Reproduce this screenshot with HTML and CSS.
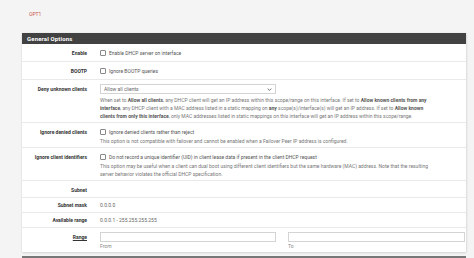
FILE: index.html
```html
<!DOCTYPE html>
<html>
<head>
<meta charset="utf-8">
<link rel="stylesheet" href="styles.css">
</head>
<body>
<div class="page">
  <div class="tabs"><span class="tab">OPT1</span></div>
  <div class="panel">
    <div class="panel-heading">General Options</div>
    <div class="row">
      <div class="label">Enable</div>
      <div class="value"><label class="check"><span class="box"></span>Enable DHCP server on interface</label></div>
    </div>
    <div class="row">
      <div class="label">BOOTP</div>
      <div class="value"><label class="check"><span class="box"></span>Ignore BOOTP queries</label></div>
    </div>
    <div class="row row-help">
      <div class="label">Deny unknown clients</div>
      <div class="value">
        <div class="select"><span>Allow all clients</span><svg class="chev" viewBox="0 0 8 5" width="5" height="3"><path d="M1 1 L4 4 L7 1" fill="none" stroke="#555" stroke-width="1.4"/></svg></div>
        <div class="help">When set to <b>Allow all clients</b>, any DHCP client will get an IP address within this scope/range on this interface. If set to <b>Allow known clients from any</b><br><b>interface</b>, any DHCP client with a MAC address listed in a static mapping on <b>any</b> scope(s)/interface(s) will get an IP address. If set to <b>Allow known</b><br><b>clients from only this interface</b>, only MAC addresses listed in static mappings on this interface will get an IP address within this scope/range.</div>
      </div>
    </div>
    <div class="row row-help">
      <div class="label">Ignore denied clients</div>
      <div class="value">
        <label class="check"><span class="box"></span>Ignore denied clients rather than reject</label>
        <div class="help">This option is not compatible with failover and cannot be enabled when a Failover Peer IP address is configured.</div>
      </div>
    </div>
    <div class="row row-help">
      <div class="label">Ignore client identifiers</div>
      <div class="value">
        <label class="check"><span class="box"></span>Do not record a unique identifier (UID) in client lease data if present in the client DHCP request</label>
        <div class="help">This option may be useful when a client can dual boot using different client identifiers but the same hardware (MAC) address. Note that the resulting<br>server behavior violates the official DHCP specification.</div>
      </div>
    </div>
    <div class="row row-subnet">
      <div class="label">Subnet</div>
      <div class="value"></div>
    </div>
    <div class="row row-text">
      <div class="label">Subnet mask</div>
      <div class="value text">0.0.0.0</div>
    </div>
    <div class="row row-text">
      <div class="label">Available range</div>
      <div class="value text">0.0.0.1 - 255.255.255.255</div>
    </div>
    <div class="row row-range">
      <div class="label"><span class="u">Range</span></div>
      <div class="value range">
        <div class="col"><div class="input"></div><div class="sub">From</div></div>
        <div class="col"><div class="input"></div><div class="sub">To</div></div>
      </div>
    </div>
  </div>
  <div class="panel-next"></div>
</div>
</body>
</html>
```

FILE: styles.css
```css
html, body {
  margin: 0;
  padding: 0;
}
body {
  background: #f4f4f4;
  font-family: Roboto, "Liberation Sans", sans-serif;
  font-size: 5px;
  color: #333;
  width: 474px;
  height: 258px;
  overflow: hidden;
}
.page {
  padding: 0 8px 0 22px;
}
.tabs {
  height: 33px;
  display: flex;
  align-items: flex-start;
  padding-left: 7px;
  padding-top: 11px;
  box-sizing: border-box;
}
.tab {
  color: #c8524c;
  font-size: 5px;
  line-height: 6px;
}
.panel {
  background: #fff;
  box-shadow: 0 1px 2px rgba(0,0,0,0.12), 1px 0 2px rgba(0,0,0,0.06);
}
.panel-heading {
  background: #424242;
  color: #fff;
  font-weight: bold;
  font-size: 6px;
  height: 11px;
  line-height: 11px;
  padding-left: 5px;
  letter-spacing: 0.15px;
}
.row {
  display: grid;
  grid-template-columns: 65px 1fr;
  column-gap: 13px;
  padding: 4px 2px 3px 0;
  border-top: 1px solid #e9e9e9;
}
.panel-heading + .row {
  border-top: none;
}
.row-help {
  padding-bottom: 2px;
}
.label {
  text-align: right;
  font-weight: bold;
  line-height: 10px;
  color: #333;
}
.value {
  min-width: 0;
}
.check {
  display: flex;
  align-items: center;
  height: 10px;
  color: #555;
  white-space: nowrap;
}
.box {
  width: 4px;
  height: 4px;
  border: 0.6px solid #888;
  border-radius: 1px;
  margin-right: 3px;
  background: #fff;
  flex: none;
}
.select {
  width: 176px;
  height: 10px;
  box-sizing: border-box;
  border: 1px solid #d4d4d4;
  display: flex;
  align-items: center;
  justify-content: space-between;
  padding: 0 3px 0 3px;
  color: #666;
  margin-bottom: 2px;
}
.chev {
  display: block;
}
.help {
  color: #777;
  line-height: 8px;
  white-space: nowrap;
}
.help b {
  color: #555;
}
.row-subnet {
  padding-bottom: 2px;
}
.row-text {
  padding-top: 3px;
  padding-bottom: 3px;
}
.row-text .label,
.row-text .text {
  line-height: 8px;
}
.text {
  color: #666;
}
.u {
  text-decoration: underline;
}
.range {
  display: grid;
  grid-template-columns: 176px 177px;
  column-gap: 12px;
}
.row-range {
  padding-bottom: 2px;
}
.input {
  height: 10px;
  box-sizing: border-box;
  border: 1px solid #d4d4d4;
  background: #fff;
}
.sub {
  color: #888;
  line-height: 8px;
}
.panel-next {
  margin-top: 4px;
  height: 6px;
  background: #777;
}
```
